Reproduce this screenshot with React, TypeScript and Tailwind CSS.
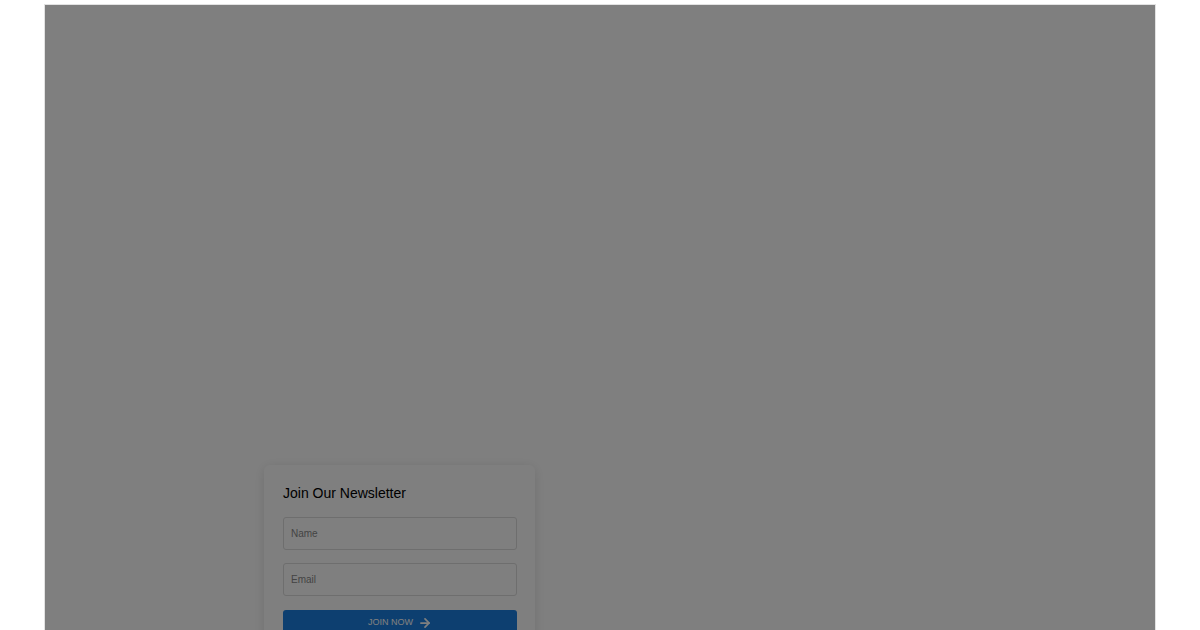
import { ArrowRight } from 'lucide-react';

export default function App() {
  return (
    <div className="min-h-screen bg-white px-[44px] pt-[4px] font-['Liberation_Sans',Arial,sans-serif]">
      <div className="relative h-[700px] overflow-hidden border border-[#e2e2e2] bg-white">
        {/* Page content */}
        <div className="pl-[219px] pt-[460px]">
          <div className="w-[271px] rounded-md bg-white pl-[19px] pr-[18px] pt-[18px] pb-[20px] shadow-[0_2px_12px_rgba(0,0,0,0.12)]">
            <h2 className="text-[14px] leading-[20px] text-black">Join Our Newsletter</h2>
            <form className="mt-[14px] flex flex-col gap-[13px]" onSubmit={(e) => e.preventDefault()}>
              <input
                type="text"
                placeholder="Name"
                className="h-[33px] w-full rounded-[3px] border border-[#dcdcdc] px-[7px] text-[10px] text-[#333] placeholder:text-[#888] outline-none"
              />
              <input
                type="email"
                placeholder="Email"
                className="h-[33px] w-full rounded-[3px] border border-[#dcdcdc] px-[7px] text-[10px] text-[#333] placeholder:text-[#888] outline-none"
              />
              <button
                type="submit"
                className="mt-[1px] flex h-[26px] w-full items-center justify-center gap-[5px] rounded-[3px] bg-[#1a7ee0] text-[9px] uppercase text-white"
              >
                Join Now
                <ArrowRight size={14} strokeWidth={3} />
              </button>
            </form>
          </div>
        </div>

        {/* Backdrop */}
        <div className="absolute inset-0 bg-black/50" />
      </div>
    </div>
  );
}
